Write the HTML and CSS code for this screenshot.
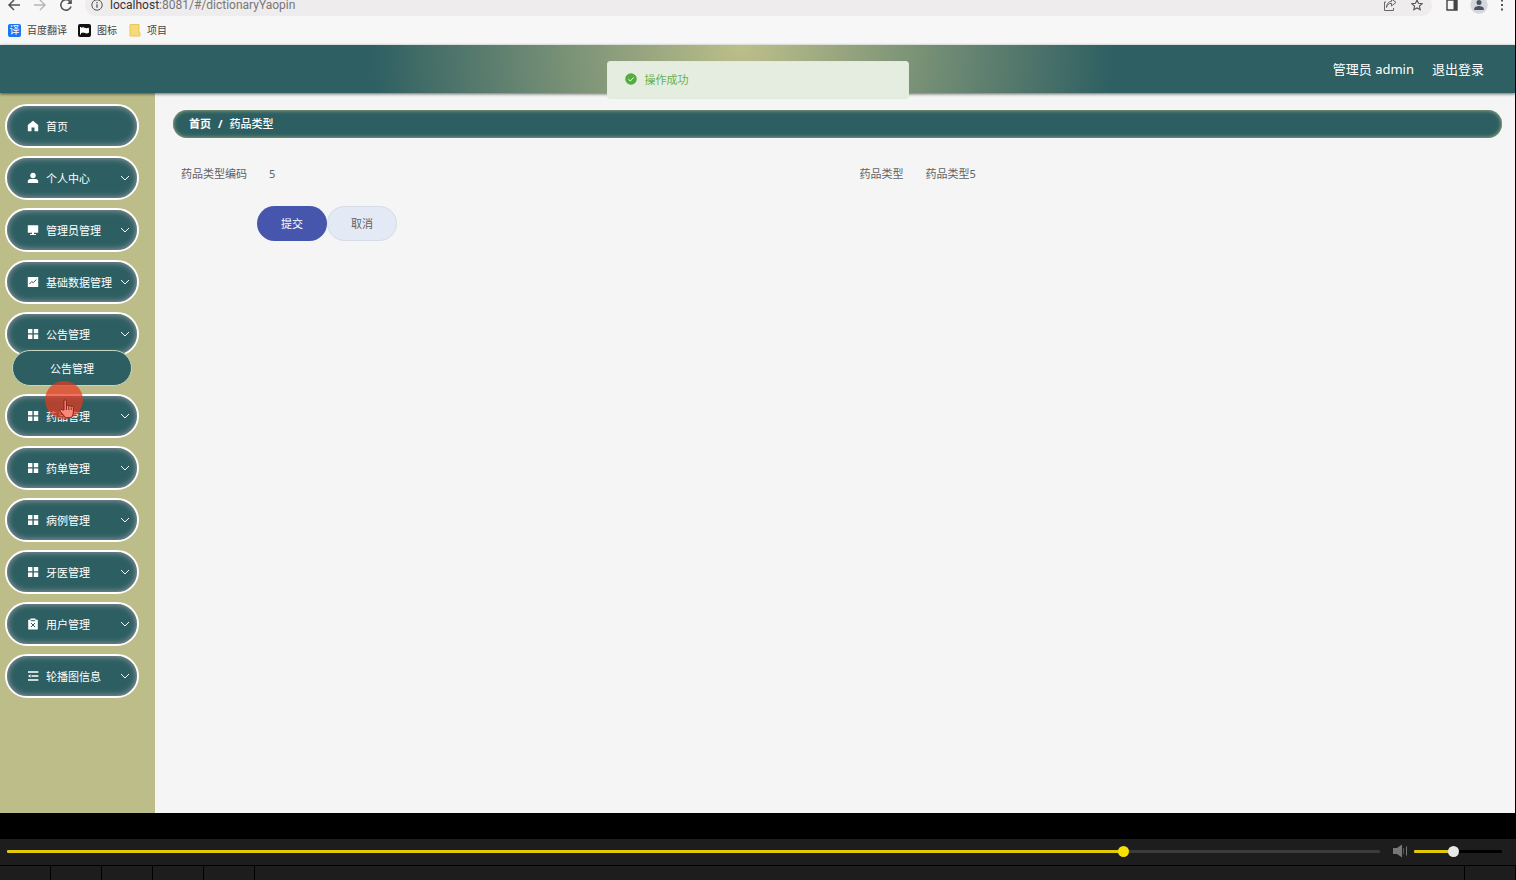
FILE: index.html
```html
<!DOCTYPE html>
<html lang="zh-CN">
<head>
    <meta charset="UTF-8">
    <meta name="viewport" content="width=device-width, initial-scale=1.0">
    <title>药品类型</title>
    <link rel="stylesheet" href="styles.css">
</head>
<body>
    <svg class="symbols" aria-hidden="true">
        <symbol id="arrow" viewBox="0 0 10 6"><path d="M1 1l4 4 4-4" fill="none" stroke="currentColor"/></symbol>
        <symbol id="grid" viewBox="0 0 12 12"><path d="M1 1h4.4v4.2H1zM6.8 1h4.4v4.2H6.8zM1 6.6h4.4v4.4H1zM6.8 6.6h4.4V11H6.8z" fill="currentColor"/></symbol>
    </svg>

    <div class="screen">
        <div class="browser">
            <div class="toolbar">
                <button class="tool" aria-label="后退"><svg width="14" height="14" viewBox="0 0 14 14"><path d="M13 7H2M7 2L2 7l5 5" fill="none" stroke="#555" stroke-width="1.5"/></svg></button>
                <button class="tool" aria-label="前进"><svg width="14" height="14" viewBox="0 0 14 14"><path d="M1 7h11M7 2l5 5-5 5" fill="none" stroke="#b5b5b5" stroke-width="1.4"/></svg></button>
                <button class="tool" aria-label="刷新"><svg width="14" height="14" viewBox="0 0 14 14"><path d="M12 8.5A5.2 5.2 0 1 1 10.8 3.4L12 4.8" fill="none" stroke="#555" stroke-width="1.6"/><path d="M12.8 1v5H8z" fill="#555"/></svg></button>
                <div class="omnibox">
                    <svg width="12" height="12" viewBox="0 0 12 12"><circle cx="6" cy="6" r="5.2" fill="none" stroke="#555"/><path d="M6 5.2v3.6M6 3v1.2" stroke="#555" stroke-width="1.3"/></svg>
                    <span class="url">localhost<span class="path">:8081/#/dictionaryYaopin</span></span>
                    <button class="tool" aria-label="分享"><svg width="14" height="14" viewBox="0 0 14 14"><path d="M3 4H1.5v8.5h9V10M3.5 9.5C4 6.5 6 5.5 8.5 5.3V8L13 4.4 8.5 1v2.3C5.5 3.6 3.5 6 3.5 9.5z" fill="none" stroke="#666"/></svg></button>
                    <button class="tool" aria-label="收藏"><svg width="12" height="12" viewBox="0 0 12 12"><path d="M6 1l1.5 3.3 3.6.4-2.7 2.4.8 3.6L6 8.9l-3.2 1.8.8-3.6L.9 4.7l3.6-.4z" fill="none" stroke="#555" stroke-width="1.1"/></svg></button>
                </div>
                <button class="tool" aria-label="侧边栏"><svg width="12" height="12" viewBox="0 0 12 12"><path d="M1 1h10v10H1z" fill="none" stroke="#444" stroke-width="1.4"/><path d="M7.5 1H11v10H7.5z" fill="#444"/></svg></button>
                <button class="tool" aria-label="用户"><svg width="18" height="18" viewBox="0 0 18 18"><circle cx="9" cy="9" r="8.7" fill="#d5d7dd"/><circle cx="9" cy="6.5" r="2.5" fill="#4d5263"/><path d="M4.2 14v-1.2C4.2 11 7 10 9 10s4.8 1 4.8 2.8V14z" fill="#4d5263"/></svg></button>
                <button class="tool" aria-label="更多"><svg width="4" height="14" viewBox="0 0 4 14"><path d="M1 1.500h2v2H1zM1 6h2v2H1zM1 10.500h2v2H1z" fill="#555"/></svg></button>
            </div>
            <div class="bookmarks">
                <a href="#" class="bookmark"><span class="badge">译</span>百度翻译</a>
                <a href="#" class="bookmark"><svg width="13" height="13" viewBox="0 0 13 13"><rect width="13" height="13" rx="2" fill="#111"/><path d="M2.500 3v7.500M3 4.200q2-1 3.600 0t3.900 0v4.300q-2 1-3.700 0T3 8.500z" fill="#fff" stroke="#fff"/></svg>图标</a>
                <a href="#" class="bookmark"><svg width="13" height="13" viewBox="0 0 13 13"><path d="M2 .5h9v8.300h1V12H2z" fill="#f6d978" stroke="#e8c65b"/></svg>项目</a>
            </div>
        </div>

        <header class="header">
            <span>管理员 admin</span>
            <button class="logout">退出登录</button>
            <div class="message" role="status">
                <svg width="12" height="12" viewBox="0 0 12 12"><circle cx="6" cy="6" r="5.800" fill="#52ad3b"/><path d="M3.400 6.200l1.900 1.800 3.400-3.600" fill="none" stroke="#fff"/></svg>
                操作成功
            </div>
        </header>

        <div class="main">
            <nav class="sidebar">
                <button class="menu-item"><svg class="icon" viewBox="0 0 12 12"><path d="M6 .8L11.200 5v6.200H7.500V7.500h-3v3.700H.8V5z" fill="currentColor"/></svg>首页</button>
                <button class="menu-item"><svg class="icon" viewBox="0 0 12 12"><circle cx="6" cy="3.500" r="2.700" fill="currentColor"/><path d="M.8 11V9.500Q.8 7 3.500 7h5q2.700 0 2.700 2.500V11z" fill="currentColor"/></svg>个人中心<svg class="arrow"><use href="#arrow"/></svg></button>
                <button class="menu-item"><svg class="icon" viewBox="0 0 12 12"><path d="M.8 1.200h10.400v7.600H7V10h2v1H3v-1h2V8.800H.8z" fill="currentColor"/></svg>管理员管理<svg class="arrow"><use href="#arrow"/></svg></button>
                <button class="menu-item"><svg class="icon" viewBox="0 0 12 12"><path d="M.8 1h10.400v10H.8z" fill="currentColor"/><path d="M2.500 8l2.200-2.500 1.500 1.200L9.400 3.600" fill="none" stroke="#2d5f62"/></svg>基础数据管理<svg class="arrow"><use href="#arrow"/></svg></button>
                <button class="menu-item" aria-expanded="true"><svg class="icon"><use href="#grid"/></svg>公告管理<svg class="arrow"><use href="#arrow"/></svg></button>
                <a href="#" class="submenu-item">公告管理</a>
                <button class="menu-item"><svg class="icon"><use href="#grid"/></svg>药品管理<svg class="arrow"><use href="#arrow"/></svg></button>
                <button class="menu-item"><svg class="icon"><use href="#grid"/></svg>药单管理<svg class="arrow"><use href="#arrow"/></svg></button>
                <button class="menu-item"><svg class="icon"><use href="#grid"/></svg>病例管理<svg class="arrow"><use href="#arrow"/></svg></button>
                <button class="menu-item"><svg class="icon"><use href="#grid"/></svg>牙医管理<svg class="arrow"><use href="#arrow"/></svg></button>
                <button class="menu-item"><svg class="icon" viewBox="0 0 12 12"><path d="M1.200 1.800H3.500V.5h5v1.300h2.300v9.700H1.200z" fill="currentColor"/><path d="M4 5l4 4M8 5L4 9M3.800 2.700h4.400" stroke="#2d5f62"/></svg>用户管理<svg class="arrow"><use href="#arrow"/></svg></button>
                <button class="menu-item"><svg class="icon" viewBox="0 0 12 12"><path d="M1 2h10.400M4.500 6h6.900M1 10h10.400" stroke="currentColor" stroke-width="1.300"/><path d="M1 6l2.500-1.800v3.600z" fill="currentColor"/></svg>轮播图信息<svg class="arrow"><use href="#arrow"/></svg></button>
            </nav>

            <main class="content">
                <div class="breadcrumb"><a href="#">首页</a><b>/</b><span>药品类型</span></div>
                <form class="form">
                    <div class="fields">
                        <div class="field">
                            <label for="code">药品类型编码</label>
                            <input type="text" id="code" value="5">
                        </div>
                        <div class="field">
                            <label for="type">药品类型</label>
                            <input type="text" id="type" value="药品类型5">
                        </div>
                    </div>
                    <div class="actions">
                        <button type="button" class="btn submit">提交</button>
                        <button type="button" class="btn cancel">取消</button>
                    </div>
                </form>
            </main>
        </div>

        <div class="pointer">
            <svg width="16" height="20" viewBox="0 0 16 20"><path d="M5 11V2.200Q5 .8 6.200.8t1.200 1.400v5q0-1 1.200-1t1.200 1.300q0-.9 1.200-.9t1.200 1.400q0-.8 1.100-.8t1.100 1.300V13q0 3.500-2.200 5.700H6.500L1.500 12.500q-.9-1.300.2-1.900t2 .4z" fill="#f58a78" stroke="#8c2015"/><path d="M7.400 7v4M9.800 8v3M12.200 8.500V11" stroke="#8c2015"/></svg>
        </div>
    </div>

    <div class="player">
        <div class="seek-row">
            <input type="range" class="seek" aria-label="播放进度" min="0" max="1000" value="816">
            <button class="tool" aria-label="音量"><svg width="16" height="14" viewBox="0 0 16 14"><path d="M1 4h4l5-3.500v13L5 10H1z" fill="#777"/><path d="M11.500 4v6" stroke="#555"/><path d="M14.500 2.500v9" stroke="#777"/></svg></button>
            <input type="range" class="volume" aria-label="音量大小" min="0" max="1000" value="445">
        </div>
        <div class="controls">
            <span></span><span></span><span></span><span></span><span></span><span class="wide"></span><span class="last"></span>
        </div>
    </div>
</body>
</html>
```
FILE: styles.css
```css
* {
    box-sizing: border-box;
}
body {
    margin: 0;
    min-height: 100vh;
    display: flex;
    flex-direction: column;
    background: #000;
    font-family: "Noto Sans", "Noto Sans CJK SC", sans-serif;
    font-size: 11px;
    color: #606266;
}
button, input {
    font: inherit;
    color: inherit;
    border: 0;
    padding: 0;
    background: none;
}
button {
    cursor: pointer;
}
a {
    color: inherit;
    text-decoration: none;
}
svg {
    flex: none;
    display: block;
}
.symbols {
    position: absolute;
    width: 0;
    height: 0;
}
.screen {
    position: relative;
    flex: 1;
    display: flex;
    flex-direction: column;
    margin-right: 1px;
    margin-bottom: 26px;
    background: #f5f5f5;
}

/* browser bars */
.browser {
    height: 45px;
    overflow: hidden;
    background: #f8f7f7;
}
.toolbar {
    display: flex;
    align-items: center;
    height: 28px;
    margin-top: -9px;
    padding: 0 11px 0 7px;
    gap: 12px;
}
.omnibox {
    flex: 1;
    display: flex;
    align-items: center;
    gap: 14px;
    height: 22px;
    margin-right: 2px;
    padding: 0 9px 0 6px;
    border-radius: 11px;
    background: #eeeced;
}
.url {
    flex: 1;
    margin-left: -7px;
    font-family: Roboto, sans-serif;
    font-size: 12px;
    line-height: 10px;
    color: #333;
}
.path {
    color: #777;
}
.bookmarks {
    display: flex;
    gap: 11px;
    padding: 4px 8px;
    font-size: 10px;
    line-height: 14px;
    color: #444;
}
.bookmark {
    display: flex;
    align-items: center;
    gap: 6px;
}
.badge {
    width: 13px;
    height: 13px;
    border-radius: 2px;
    background: #1677f0;
    color: #fff;
    line-height: 13px;
    text-align: center;
}

.header {
    position: relative;
    z-index: 2;
    display: flex;
    align-items: center;
    justify-content: flex-end;
    gap: 18px;
    height: 48px;
    padding: 0 31px 2px;
    background: radial-gradient(circle at 49% 0, #bdbf89 0, #2e5f62 48%);
    box-shadow: 0 1px 3px rgba(0, 0, 0, 0.6);
    color: #fff;
    font-size: 13px;
}
.message {
    position: absolute;
    top: 16px;
    left: 50%;
    transform: translateX(-50%);
    display: flex;
    align-items: center;
    gap: 8px;
    width: 302px;
    height: 38px;
    padding: 0 17px 2px;
    border: 1px solid #e0ecdb;
    border-radius: 3px;
    background: #e4ede0;
    color: #67b150;
    font-size: 11px;
}

.main {
    flex: 1;
    display: flex;
}
.sidebar {
    display: flex;
    flex-direction: column;
    gap: 8px;
    width: 155px;
    padding: 11px 16px 11px 5px;
    background: #bdbd89;
}
.menu-item {
    display: flex;
    align-items: center;
    gap: 7px;
    height: 44px;
    padding: 0 7px 0 20px;
    border: 2px solid #fff;
    border-radius: 22px;
    background: #2d5f62;
    box-shadow: inset 0 0 6px #aaa1a9;
    color: #fff;
}
.icon {
    width: 12px;
    height: 12px;
}
.arrow {
    width: 10px;
    height: 6px;
    margin-left: auto;
}
.submenu-item {
    z-index: 1;
    height: 36px;
    margin: -14px 7px 0;
    border: 1px solid #c5d6c0;
    border-radius: 18px;
    background: #2d5f62;
    color: #fff;
    line-height: 36px;
    text-align: center;
}

.content {
    flex: 1;
    padding: 17px 13px 17px 18px;
}
.breadcrumb {
    display: flex;
    align-items: center;
    gap: 7px;
    height: 28px;
    padding: 0 16px 2px;
    border-radius: 14px;
    background: #2d5f62;
    box-shadow: inset 0 0 4px #bdbd89;
    color: #fff;
    font-weight: 500;
}
.breadcrumb a {
    font-weight: bold;
}
.form {
    padding: 20px 0 0 8px;
}
.fields {
    display: grid;
    grid-template-columns: 1fr 1fr;
    gap: 36px;
}
.field {
    display: flex;
    align-items: center;
    gap: 22px;
    height: 30px;
}
.field input {
    flex: 1;
    outline: none;
}
.actions {
    display: flex;
    margin: 18px 0 0 76px;
}
.btn {
    width: 70px;
    height: 35px;
    padding-bottom: 2px;
    border-radius: 18px;
}
.submit {
    background: #4656ad;
    color: #fff;
}
.cancel {
    border: 1px solid #d6dce5;
    background: #e3eaf5;
}

/* mouse highlight on top of the page */
.pointer {
    position: absolute;
    z-index: 3;
    left: 45px;
    top: 381px;
    width: 38px;
    height: 38px;
    padding: 18px 0 0 14px;
    border-radius: 50%;
    background: rgba(232, 55, 30, 0.7);
}

/* video player */
.player {
    background: #1d1d1d;
}
.seek-row {
    display: flex;
    align-items: center;
    height: 26px;
    padding: 0 14px 2px 7px;
}
.seek-row .tool {
    margin: 0 6px 0 12px;
}
input[type="range"] {
    appearance: none;
    height: 11px;
    margin: 0;
}
.seek {
    flex: 1;
}
.volume {
    width: 88px;
}
input[type="range"]::-webkit-slider-runnable-track {
    height: 3px;
    border-radius: 1px;
}
.seek::-webkit-slider-runnable-track {
    background: linear-gradient(to right, #e0ca08 81%, #3c3c3c 81%);
}
.volume::-webkit-slider-runnable-track {
    background: linear-gradient(to right, #e0ca08 44%, #000 44%);
}
input[type="range"]::-webkit-slider-thumb {
    appearance: none;
    width: 11px;
    height: 11px;
    margin-top: -4px;
    border-radius: 50%;
    background: #f7df00;
}
input.volume[type="range"]::-webkit-slider-thumb {
    background: #e8e8e8;
}
.controls {
    display: flex;
    height: 15px;
    border-top: 1px solid #000;
}
.controls span {
    width: 51px;
    border-right: 1px solid #000;
}
.controls .wide {
    flex: 1;
}
```
